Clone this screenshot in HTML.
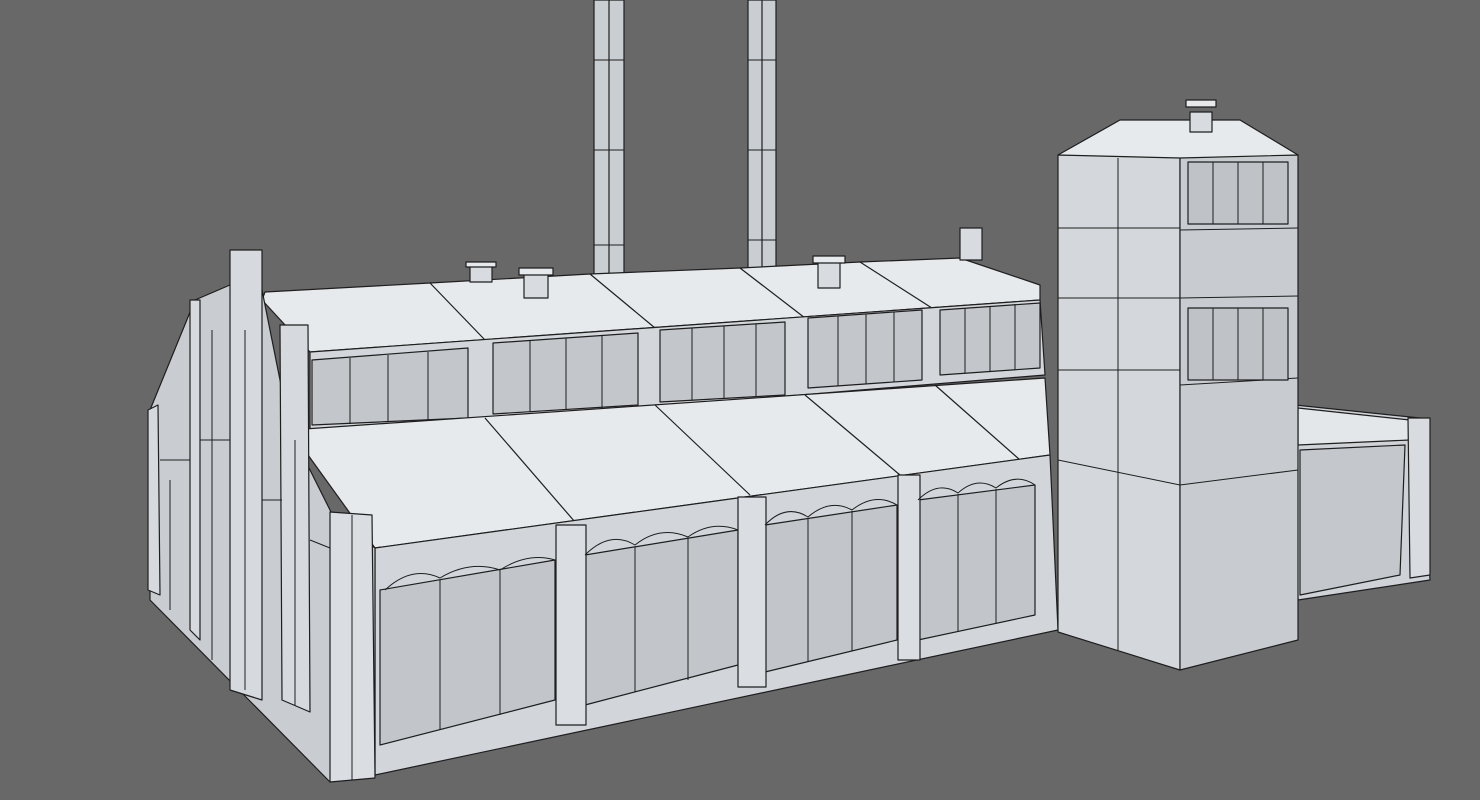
<!DOCTYPE html>
<html><head><meta charset="utf-8"><style>
html,body{margin:0;padding:0;background:#686868;width:1480px;height:800px;overflow:hidden}
svg{display:block}
</style></head><body>
<svg width="1480" height="800" viewBox="0 0 1480 800" xmlns="http://www.w3.org/2000/svg">
<rect width="1480" height="800" fill="#686868"/>
<g stroke="#1e1e1e" stroke-width="1.2" stroke-linejoin="round">
<!-- chimneys -->
<rect x="594" y="0" width="30" height="280" fill="#c9ced3"/>
<line x1="609" y1="0" x2="609" y2="280"/>
<rect x="748" y="0" width="28" height="272" fill="#c9ced3"/>
<line x1="762" y1="0" x2="762" y2="272"/>
<g stroke-width="1">
<line x1="594" y1="60" x2="624" y2="60"/><line x1="594" y1="150" x2="624" y2="150"/><line x1="594" y1="245" x2="624" y2="245"/>
<line x1="748" y1="60" x2="776" y2="60"/><line x1="748" y1="150" x2="776" y2="150"/><line x1="748" y1="240" x2="776" y2="240"/>
</g>
<!-- right low building -->
<polygon points="1295,405 1420,418 1430,580 1298,600" fill="#cfd3d7"/>
<polygon points="1298,408 1410,420 1410,440 1298,445" fill="#e3e7ea"/>
<polygon points="1300,450 1405,445 1400,575 1300,595" fill="#c4c8cc"/>
<polygon points="1408,418 1430,418 1430,575 1410,578" fill="#d8dce0"/>
<!-- upper roof strip -->
<polygon points="265,292 430,283 590,274 740,268 860,262 960,258 1040,285 1040,300 310,352 262,300" fill="#e6eaed"/>
<g fill="none">
<line x1="430" y1="283" x2="485" y2="340"/><line x1="590" y1="274" x2="655" y2="328"/>
<line x1="740" y1="268" x2="805" y2="318"/><line x1="860" y1="262" x2="935" y2="310"/>
</g>
<!-- roof vents -->
<rect x="470" y="264" width="22" height="18" fill="#d8dce0"/><rect x="466" y="262" width="30" height="5" fill="#e6eaed"/>
<rect x="524" y="274" width="24" height="24" fill="#d8dce0"/><rect x="519" y="268" width="34" height="7" fill="#e6eaed"/>
<rect x="818" y="262" width="22" height="26" fill="#d8dce0"/><rect x="813" y="256" width="32" height="7" fill="#e6eaed"/>
<rect x="960" y="228" width="22" height="32" fill="#d8dce0"/>
<!-- upper window wall -->
<polygon points="310,352 1040,300 1045,375 310,435" fill="#d3d7db"/>
<g fill="#c3c7cb">
<polygon points="312,360 468,348 468,418 312,425"/>
<polygon points="493,343 638,333 638,405 493,414"/>
<polygon points="660,330 785,322 785,395 660,402"/>
<polygon points="808,318 922,310 922,380 808,388"/>
<polygon points="940,310 1040,303 1040,368 940,375"/>
</g>
<g fill="none" stroke-width="1">
<line x1="350" y1="358" x2="350" y2="424"/><line x1="388" y1="355" x2="388" y2="422"/><line x1="428" y1="352" x2="428" y2="420"/>
<line x1="530" y1="341" x2="530" y2="412"/><line x1="566" y1="338" x2="566" y2="410"/><line x1="602" y1="336" x2="602" y2="408"/>
<line x1="692" y1="328" x2="692" y2="400"/><line x1="724" y1="326" x2="724" y2="398"/><line x1="756" y1="324" x2="756" y2="396"/>
<line x1="838" y1="316" x2="838" y2="386"/><line x1="866" y1="314" x2="866" y2="384"/><line x1="894" y1="312" x2="894" y2="382"/>
<line x1="965" y1="308" x2="965" y2="373"/><line x1="990" y1="306" x2="990" y2="371"/><line x1="1015" y1="304" x2="1015" y2="370"/>
</g>
<!-- lower roof -->
<polygon points="290,430 1045,378 1050,455 375,548" fill="#e6eaed"/>
<g fill="none">
<line x1="485" y1="418" x2="575" y2="522"/><line x1="655" y1="405" x2="750" y2="495"/>
<line x1="805" y1="395" x2="900" y2="475"/><line x1="935" y1="385" x2="1020" y2="460"/>
</g>
<!-- front wall -->
<polygon points="375,548 1050,455 1058,630 375,775" fill="#d2d6da"/>
<g fill="#c2c6ca">
<polygon points="380,590 555,560 555,700 380,745"/>
<polygon points="585,555 738,530 738,665 585,705"/>
<polygon points="765,525 897,505 897,640 765,672"/>
<polygon points="918,500 1035,485 1035,615 918,640"/>
</g>
<g fill="#dadee2">
<rect x="556" y="525" width="30" height="200"/>
<rect x="738" y="497" width="28" height="190"/>
<rect x="898" y="475" width="22" height="185"/>
</g>
<g fill="none" stroke-width="1">
<line x1="440" y1="580" x2="440" y2="730"/><line x1="500" y1="570" x2="500" y2="715"/>
<line x1="635" y1="547" x2="635" y2="692"/><line x1="688" y1="538" x2="688" y2="680"/>
<line x1="808" y1="518" x2="808" y2="662"/><line x1="852" y1="511" x2="852" y2="651"/>
<line x1="958" y1="494" x2="958" y2="632"/><line x1="996" y1="489" x2="996" y2="624"/>
<path d="M385,590 Q412,565 440,578 Q470,560 500,570 Q528,552 555,560"/>
<path d="M585,555 Q610,530 635,545 Q660,525 688,537 Q712,520 738,530"/>
<path d="M765,525 Q786,503 808,517 Q830,498 852,510 Q875,492 897,505"/>
<path d="M918,500 Q938,480 958,493 Q977,476 996,488 Q1016,472 1035,485"/>
</g>
<!-- left wing -->
<polygon points="150,410 195,300 230,285 262,290 290,430 335,520 375,548 375,775 330,782 150,600" fill="#c9cdd1"/>
<polygon points="230,250 262,250 262,700 230,690" fill="#d6dade"/>
<polygon points="190,300 200,300 200,640 190,630" fill="#d6dade"/>
<polygon points="280,325 308,325 310,712 282,700" fill="#d6dade"/>
<polygon points="330,512 372,515 375,778 330,782" fill="#dadee2"/>
<polygon points="148,410 158,405 160,595 148,590" fill="#d6dade"/>
<g fill="none" stroke-width="1">
<line x1="200" y1="440" x2="230" y2="440"/><line x1="262" y1="500" x2="282" y2="500"/>
<line x1="160" y1="460" x2="190" y2="460"/><line x1="310" y1="540" x2="330" y2="548"/>
<line x1="212" y1="330" x2="212" y2="660"/><line x1="245" y1="330" x2="245" y2="690"/>
<line x1="170" y1="480" x2="170" y2="610"/><line x1="295" y1="440" x2="295" y2="705"/>
<line x1="352" y1="515" x2="352" y2="780"/>
</g>
<!-- tower -->
<polygon points="1058,155 1180,155 1180,670 1058,632" fill="#d4d8dc"/>
<polygon points="1180,155 1298,155 1298,640 1180,670" fill="#c8ccd0"/>
<polygon points="1058,155 1120,120 1240,120 1298,155 1180,158" fill="#e6eaed"/>
<rect x="1190" y="112" width="22" height="20" fill="#d8dce0"/>
<rect x="1186" y="100" width="30" height="7" fill="#e6eaed"/>
<g fill="none" stroke-width="1">
<line x1="1118" y1="158" x2="1118" y2="650"/>
<line x1="1058" y1="228" x2="1180" y2="228"/><line x1="1058" y1="298" x2="1180" y2="298"/>
<line x1="1058" y1="370" x2="1180" y2="370"/><line x1="1058" y1="460" x2="1180" y2="485"/>
<line x1="1180" y1="230" x2="1298" y2="228"/><line x1="1180" y1="298" x2="1298" y2="296"/>
<line x1="1180" y1="385" x2="1298" y2="378"/><line x1="1180" y1="485" x2="1298" y2="470"/>
</g>
<g fill="#bfc3c7">
<rect x="1188" y="162" width="100" height="62"/>
<rect x="1188" y="308" width="100" height="72"/>
</g>
<g fill="none" stroke-width="1">
<line x1="1213" y1="162" x2="1213" y2="224"/><line x1="1238" y1="162" x2="1238" y2="224"/><line x1="1263" y1="162" x2="1263" y2="224"/>
<line x1="1213" y1="308" x2="1213" y2="380"/><line x1="1238" y1="308" x2="1238" y2="380"/><line x1="1263" y1="308" x2="1263" y2="380"/>
</g>
</g>
</svg>
</body></html>
